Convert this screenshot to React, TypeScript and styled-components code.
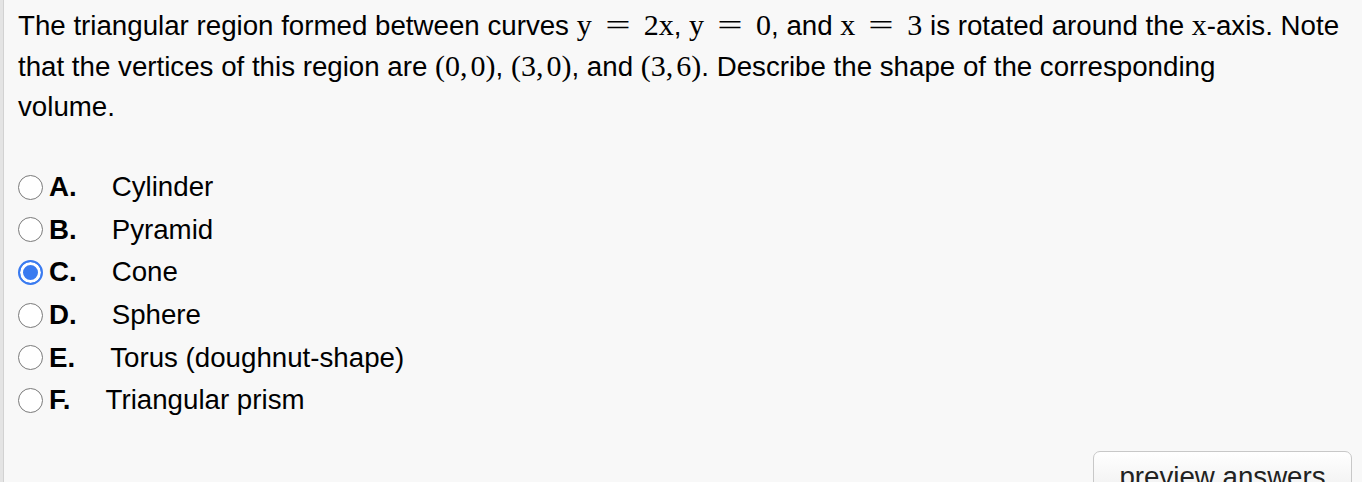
import React, { useState } from "react";
import styled, { createGlobalStyle } from "styled-components";

const GlobalStyle = createGlobalStyle`
  html, body {
    margin: 0;
    padding: 0;
    background: #f8f8f8;
    overflow: hidden;
  }
`;

const Page = styled.div`
  height: 482px;
  box-sizing: border-box;
  border-left: 3px solid #e4e4e4;
  box-shadow: inset 1px 0 0 #d2d2d2;
  background: #f8f8f8;
  padding: 5px 18px 0 15px;
  font-family: "Liberation Sans", Arial, sans-serif;
  font-size: 27.7px;
  color: #000;
  display: flex;
  flex-direction: column;
`;

const Question = styled.p`
  margin: 0;
  line-height: 40px;
`;

const M = styled.span`
  font-family: "Liberation Serif", "Times New Roman", serif;
  font-size: 30px;
  white-space: nowrap;
`;

const Op = styled.span`
  display: inline-block;
  width: 26px;
  margin: 0 13px;
  text-align: center;
  transform: scaleX(1.5);
`;

const Sep = styled.span`
  margin-right: 0.1em;
`;

const Options = styled.div`
  margin-top: 39px;
  display: flex;
  flex-direction: column;
`;

const Row = styled.label`
  display: flex;
  align-items: center;
  height: 42.6px;
  cursor: pointer;
`;

const Radio = styled.span<{ $checked: boolean }>`
  width: 25px;
  height: 25px;
  box-sizing: border-box;
  border-radius: 50%;
  margin-right: 6px;
  flex: none;
  border: ${(p) => (p.$checked ? "2px solid #3a7bf0" : "1.5px solid #7a7a7a")};
  background: ${(p) => (p.$checked ? "#3a7bf0" : "#fff")};
  box-shadow: ${(p) => (p.$checked ? "inset 0 0 0 3px #fff" : "none")};
`;

const Letter = styled.b`
  font-weight: 700;
`;

const Answer = styled.span`
  margin-left: 35px;
`;

const Footer = styled.div`
  display: flex;
  justify-content: flex-end;
  margin-top: auto;
`;

const PreviewButton = styled.button`
  width: 259px;
  height: 40px;
  margin-right: -8px;
  margin-bottom: -9px;
  border: 1px solid #c8c8c8;
  border-radius: 7px;
  background: linear-gradient(#ffffff, #f1f1f1);
  font-family: "Liberation Sans", Arial, sans-serif;
  font-size: 27.7px;
  color: #222;
  padding: 10px 0 0;
  line-height: 30px;
  white-space: nowrap;
`;

const choices = [
  { key: "A.", text: "Cylinder" },
  { key: "B.", text: "Pyramid" },
  { key: "C.", text: "Cone" },
  { key: "D.", text: "Sphere" },
  { key: "E.", text: "Torus (doughnut-shape)" },
  { key: "F.", text: "Triangular prism" },
];

const Eq = ({ l, r }: { l: string; r: string }) => (
  <M>
    {l}
    <Op>=</Op>
    {r}
  </M>
);

const Pt = ({ a, b }: { a: string; b: string }) => (
  <M>
    ({a}
    <Sep>,</Sep>
    {b})
  </M>
);

export default function App() {
  const [picked, setPicked] = useState("C.");

  return (
    <>
      <GlobalStyle />
      <Page>
        <Question>
          The triangular region formed between curves <Eq l="y" r="2x" />,{" "}
          <Eq l="y" r="0" />, and <Eq l="x" r="3" /> is rotated around the{" "}
          <M>x</M>-axis. Note that the vertices of this region are{" "}
          <Pt a="0" b="0" />, <Pt a="3" b="0" />, and <Pt a="3" b="6" />.
          Describe the shape of the corresponding
          <br />
          volume.
        </Question>

        <Options>
          {choices.map((c) => (
            <Row key={c.key} onClick={() => setPicked(c.key)}>
              <Radio $checked={picked === c.key} />
              <Letter>{c.key}</Letter>
              <Answer>{c.text}</Answer>
            </Row>
          ))}
        </Options>

        <Footer>
          <PreviewButton>preview answers</PreviewButton>
        </Footer>
      </Page>
    </>
  );
}
